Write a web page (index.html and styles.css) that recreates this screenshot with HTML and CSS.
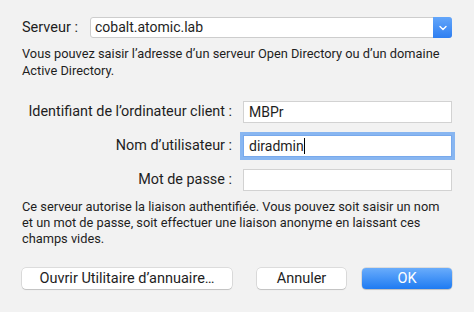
FILE: index.html
```html
<!DOCTYPE html>
<html lang="fr">
<head>
    <meta charset="UTF-8">
    <title>Serveur de répertoire</title>
    <link rel="stylesheet" href="styles.css">
</head>
<body>
    <div class="dialog">
        <div class="server-row">
            <span class="server-label">Serveur :</span>
            <div class="combo">
                <span class="combo-value">cobalt.atomic.lab</span>
                <span class="combo-button">
                    <svg width="8" height="6" viewBox="0 0 8 6"><path d="M1 1.5 L4 4.5 L7 1.5" fill="none" stroke="#fff" stroke-width="1.4" stroke-linecap="round" stroke-linejoin="round"/></svg>
                </span>
            </div>
        </div>
        <p class="hint">Vous pouvez saisir l’adresse d’un serveur Open Directory ou d’un domaine Active Directory.</p>

        <div class="form">
            <label class="form-label">Identifiant de l’ordinateur client :</label>
            <div class="field">MBPr</div>
            <label class="form-label">Nom d’utilisateur :</label>
            <div class="field focused">diradmin<span class="caret"></span></div>
            <label class="form-label">Mot de passe :</label>
            <div class="field"></div>
        </div>

        <p class="hint bind">Ce serveur autorise la liaison authentifiée. Vous pouvez soit saisir un nom et un mot de passe, soit effectuer une liaison anonyme en laissant ces champs vides.</p>

        <div class="buttons">
            <button class="btn open">Ouvrir Utilitaire d’annuaire…</button>
            <button class="btn cancel">Annuler</button>
            <button class="btn primary">OK</button>
        </div>
    </div>
</body>
</html>
```

FILE: styles.css
```css
body {
    margin: 0;
    background-color: #f2f2f2;
    color: #1e1e1e;
    font-family: Roboto, "Noto Sans", sans-serif;
    width: 474px;
    height: 312px;
    overflow: hidden;
}

.dialog {
    padding: 17px 22px 0 22px;
}

.server-row {
    display: flex;
    align-items: center;
    height: 21px;
}

.server-label {
    font-size: 14.5px;
    width: 68px;
}

.combo {
    flex: 1;
    display: flex;
    height: 21px;
    background: #fff;
    border: 1px solid #cdcdcd;
    border-radius: 3px;
    box-sizing: border-box;
}

.combo-value {
    flex: 1;
    font-size: 14px;
    line-height: 19px;
    padding-left: 4px;
}

.combo-button {
    width: 19px;
    margin: -1px -1px -1px 0;
    display: flex;
    align-items: center;
    justify-content: center;
    background: linear-gradient(#63a6fa, #2e7ef1);
    border-radius: 0 3px 3px 0;
}

.hint {
    margin: 7px 0 0 0;
    font-size: 12.8px;
    line-height: 17px;
}

.form {
    display: grid;
    grid-template-columns: 210px 209px;
    column-gap: 11px;
    row-gap: 12px;
    margin-top: 22px;
}

.form-label {
    font-size: 14.4px;
    text-align: right;
    line-height: 22px;
    white-space: nowrap;
}

.field {
    height: 22px;
    background: #fff;
    border: 1px solid #d2d2d2;
    box-sizing: border-box;
    font-size: 14px;
    line-height: 20px;
    padding-left: 5px;
}

.field.focused {
    box-shadow: 0 0 0 3px #88b6f1;
    border-color: #78a9ec;
}

.caret {
    display: inline-block;
    width: 1px;
    height: 16px;
    background: #000;
    vertical-align: -3px;
}

.hint.bind {
    margin-top: 8px;
    line-height: 16px;
}

.buttons {
    display: flex;
    margin-top: 21px;
}

.btn {
    height: 21px;
    font-family: inherit;
    font-size: 14.5px;
    color: #1e1e1e;
    background: #fff;
    border: none;
    border-radius: 4px;
    box-shadow: 0 0 0 0.5px rgba(0, 0, 0, 0.18), 0 1px 1px rgba(0, 0, 0, 0.12);
    padding: 0;
}

.open {
    width: 210px;
}

.cancel {
    width: 89px;
    margin-left: 25px;
}

.primary {
    width: 90px;
    margin-left: 16px;
    color: #fff;
    background: linear-gradient(#69acfb, #1f7bf2);
}
```
